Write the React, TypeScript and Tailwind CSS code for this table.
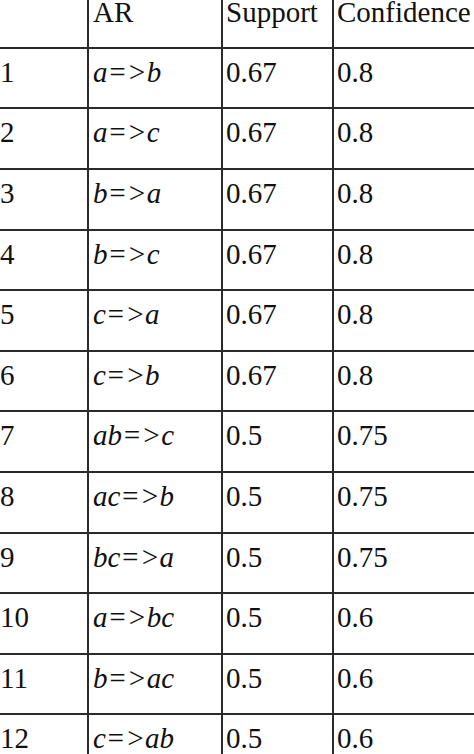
import React from "react";

const rows: { n: string; ar: string; s: string; c: string; h: string }[] = [
  { n: "1", ar: "a=>b", s: "0.67", c: "0.8", h: "h-[60px]" },
  { n: "2", ar: "a=>c", s: "0.67", c: "0.8", h: "h-[61px]" },
  { n: "3", ar: "b=>a", s: "0.67", c: "0.8", h: "h-[61px]" },
  { n: "4", ar: "b=>c", s: "0.67", c: "0.8", h: "h-[60px]" },
  { n: "5", ar: "c=>a", s: "0.67", c: "0.8", h: "h-[61px]" },
  { n: "6", ar: "c=>b", s: "0.67", c: "0.8", h: "h-[60px]" },
  { n: "7", ar: "ab=>c", s: "0.5", c: "0.75", h: "h-[61px]" },
  { n: "8", ar: "ac=>b", s: "0.5", c: "0.75", h: "h-[61px]" },
  { n: "9", ar: "bc=>a", s: "0.5", c: "0.75", h: "h-[60px]" },
  { n: "10", ar: "a=>bc", s: "0.5", c: "0.6", h: "h-[61px]" },
  { n: "11", ar: "b=>ac", s: "0.5", c: "0.6", h: "h-[60px]" },
  { n: "12", ar: "c=>ab", s: "0.5", c: "0.6", h: "h-[61px]" },
];

export default function App() {
  return (
    <div
      className="w-[474px] h-[754px] overflow-hidden bg-white text-[#111] text-[29px]"
      style={{ fontFamily: '"Liberation Serif", "Times New Roman", serif' }}
    >
      <div className="grid grid-cols-[87px_134px_111px_1fr] h-[47px] leading-[25px] whitespace-nowrap">
        <div className="pl-0"></div>
        <div className="border-l-2 border-[#2a2a2a] pl-[4px]">AR</div>
        <div className="border-l-2 border-[#2a2a2a] pl-[3px]">Support</div>
        <div className="border-l-2 border-[#2a2a2a] pl-[3px]">Confidence</div>
      </div>
      {rows.map((r) => (
        <div
          key={r.n}
          className={`grid grid-cols-[87px_134px_111px_1fr] border-t-2 border-[#2a2a2a] leading-[29px] whitespace-nowrap ${r.h}`}
        >
          <div className="pt-[9px] pl-0">{r.n}</div>
          <div className="border-l-2 border-[#2a2a2a] pt-[9px] pl-[4px] italic">{r.ar}</div>
          <div className="border-l-2 border-[#2a2a2a] pt-[9px] pl-[3px]">{r.s}</div>
          <div className="border-l-2 border-[#2a2a2a] pt-[9px] pl-[3px]">{r.c}</div>
        </div>
      ))}
    </div>
  );
}
